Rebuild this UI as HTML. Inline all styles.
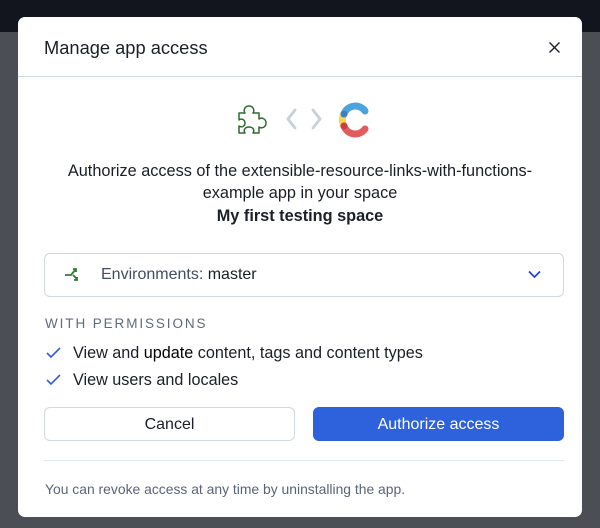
<html><head><style>
body{margin:0;width:600px;height:528px;background:#4b4e54;font-family:"Liberation Sans",sans-serif;position:relative;overflow:hidden}
.top{position:absolute;left:0;top:0;width:600px;height:32px;background:#12151d}
.m{position:absolute;left:18px;top:17px;width:564px;height:500px;background:#fff;border-radius:7px}
.t{position:absolute;left:26px;top:20px;font-size:18.3px;color:#1b1f27}
.hl{position:absolute;left:0;top:59px;width:564px;height:1px;background:#cfd9e0}
.c{position:absolute;left:0;width:564px;text-align:center;font-size:16.3px;color:#1b1f27}
.sel{position:absolute;left:26px;top:236px;width:518px;height:42px;border:1px solid #cfd9e0;border-radius:6px}
.p{position:absolute;left:55px;font-size:16.2px;color:#1b1f27}
.btn{position:absolute;top:390px;height:34px;border-radius:6px;font-size:16px;display:flex;align-items:center;justify-content:center;box-sizing:border-box;padding-top:2px}
</style></head><body>
<div class="top"></div>
<div class="m">
<div class="t">Manage app access</div>
<svg style="position:absolute;left:530px;top:24px" width="13" height="13" viewBox="0 0 13 13"><path d="M1.5 1.5L11.5 11.5M11.5 1.5L1.5 11.5" stroke="#1b1f27" stroke-width="1.4"/></svg>
<div class="hl"></div>
<svg style="position:absolute;left:219px;top:86px" width="32" height="32" viewBox="0 0 32 32"><path d="M2 10h6c-2-3 0-7 4-7s6 4 4 7h6v6c3-2 7 0 7 4s-4 6-7 4v6h-6c2-3 0-6-4-6s-6 3-4 6H2v-7c3 2 6 0 6-3s-3-5-6-3z" fill="none" stroke="#2e6b2e" stroke-width="1.5" stroke-linejoin="round"/></svg>
<svg style="position:absolute;left:267px;top:89px" width="38" height="26" viewBox="0 0 38 26"><path d="M10 4L3 13l7 9M28 4l7 9-7 9" fill="none" stroke="#c8d1da" stroke-width="2.8" stroke-linecap="round" stroke-linejoin="round"/></svg>
<svg style="position:absolute;left:317px;top:84px" width="38" height="38" viewBox="0 0 38 38"><path d="M9 13A12 12 0 0 1 30 10" fill="none" stroke="#4aa3df" stroke-width="7" stroke-linecap="round"/><path d="M9 13A12 12 0 0 0 9 25" fill="none" stroke="#fbd154" stroke-width="7" stroke-linecap="round"/><path d="M9 25A12 12 0 0 0 30 28" fill="none" stroke="#e15c5c" stroke-width="7" stroke-linecap="round"/><circle cx="9" cy="13" r="3.5" fill="#3a7ec4"/><circle cx="9" cy="25" r="3.5" fill="#c9413f"/></svg>
<div class="c" style="top:145px">Authorize access of the extensible-resource-links-with-functions-</div>
<div class="c" style="top:167px">example app in your space</div>
<div class="c" style="top:190px;font-weight:bold">My first testing space</div>
<div class="sel">
<svg style="position:absolute;left:19px;top:12px" width="18" height="18" viewBox="0 0 18 18"><path d="M1 9h6l5-6M9 3h3v3M9 9l4 4M10 14h3v-3" fill="none" stroke="#2e7d32" stroke-width="1.8"/></svg>
<div style="position:absolute;left:56px;top:12px;font-size:16px;color:#414d63">Environments: <span style="color:#1b1f27">master</span></div>
<svg style="position:absolute;left:483px;top:16px" width="13" height="9" viewBox="0 0 13 9"><path d="M1 1.5l5.5 5.5 5.5-5.5" fill="none" stroke="#1e4bbf" stroke-width="1.8"/></svg>
</div>
<div style="position:absolute;left:27px;top:299px;font-size:13.5px;letter-spacing:1.9px;color:#5f6a80">WITH PERMISSIONS</div>
<svg style="position:absolute;left:28px;top:330px" width="15" height="12" viewBox="0 0 15 12"><path d="M1 6l4 4 9-9" fill="none" stroke="#2e5ed8" stroke-width="1.6"/></svg>
<div class="p" style="top:327px">View and <span style="color:#000">update</span> content, tags and content types</div>
<svg style="position:absolute;left:28px;top:357px" width="15" height="12" viewBox="0 0 15 12"><path d="M1 6l4 4 9-9" fill="none" stroke="#2e5ed8" stroke-width="1.6"/></svg>
<div class="p" style="top:354px">View users and locales</div>
<div class="btn" style="left:26px;width:251px;border:1px solid #cfd9e0;color:#1b1f27">Cancel</div>
<div class="btn" style="left:295px;width:251px;background:#2e61dc;color:#fff">Authorize access</div>
<div style="position:absolute;left:26px;top:443px;width:520px;height:1px;background:#e3e8ec"></div>
<div style="position:absolute;left:27px;top:464px;font-size:13.9px;color:#5a6479">You can revoke access at any time by uninstalling the app.</div>
</div>
</body></html>
